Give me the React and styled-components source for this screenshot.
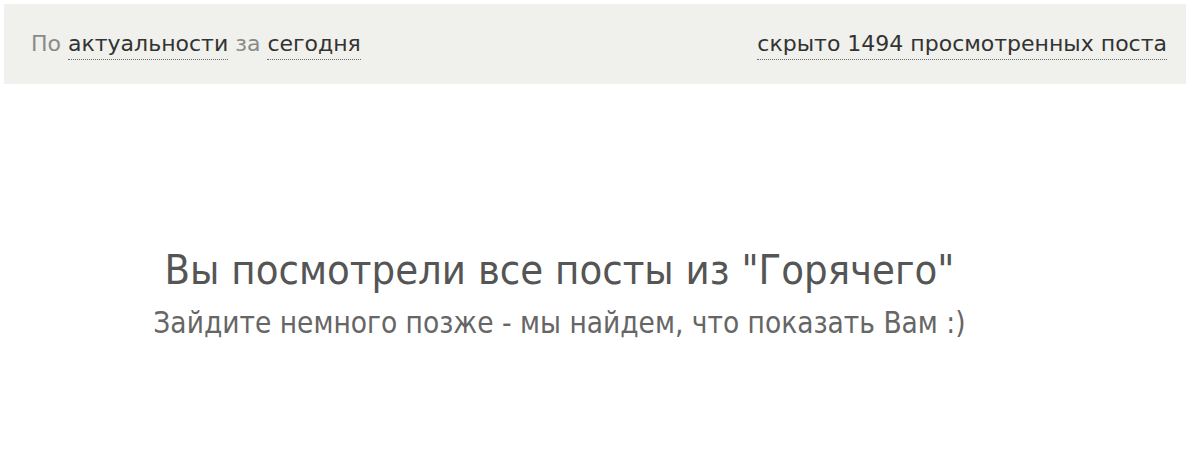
import React from "react";
import styled, { createGlobalStyle } from "styled-components";

const GlobalStyle = createGlobalStyle`
  body {
    margin: 0;
    background: #ffffff;
    font-family: "DejaVu Sans", Verdana, sans-serif;
  }
`;

const Page = styled.div`
  padding: 4px 14px 0 4px;
`;

const SortBar = styled.div`
  display: flex;
  justify-content: space-between;
  align-items: center;
  height: 80px;
  padding: 2px 19px 0 27px;
  box-sizing: border-box;
  background: #f0f0ec;
  font-size: 22px;
  line-height: 26px;
  color: #8a8a8a;
`;

const SortGroup = styled.div`
  display: flex;
  gap: 7px;
  white-space: nowrap;
`;

const DottedLink = styled.a`
  color: #333333;
  text-decoration: none;
  padding-bottom: 2px;
  border-bottom: 1px dotted #6a6a6a;
  cursor: pointer;
`;

const Empty = styled.div`
  width: 1111px;
  margin-top: 162px;
  text-align: center;
  font-family: "DejaVu Sans Condensed", "DejaVu Sans", Tahoma, sans-serif;
`;

const Title = styled.h2`
  margin: 0 0 11px;
  font-size: 41.4px;
  line-height: 49px;
  font-weight: normal;
  color: #555555;
`;

const Hint = styled.p`
  margin: 0;
  font-size: 29.5px;
  line-height: 35px;
  color: #666666;
`;

export default function App() {
  return (
    <Page>
      <GlobalStyle />
      <SortBar>
        <SortGroup>
          <span>По</span>
          <DottedLink>актуальности</DottedLink>
          <span>за</span>
          <DottedLink>сегодня</DottedLink>
        </SortGroup>
        <SortGroup>
          <DottedLink>скрыто 1494 просмотренных поста</DottedLink>
        </SortGroup>
      </SortBar>
      <Empty>
        <Title>Вы посмотрели все посты из "Горячего"</Title>
        <Hint>Зайдите немного позже - мы найдем, что показать Вам :)</Hint>
      </Empty>
    </Page>
  );
}
